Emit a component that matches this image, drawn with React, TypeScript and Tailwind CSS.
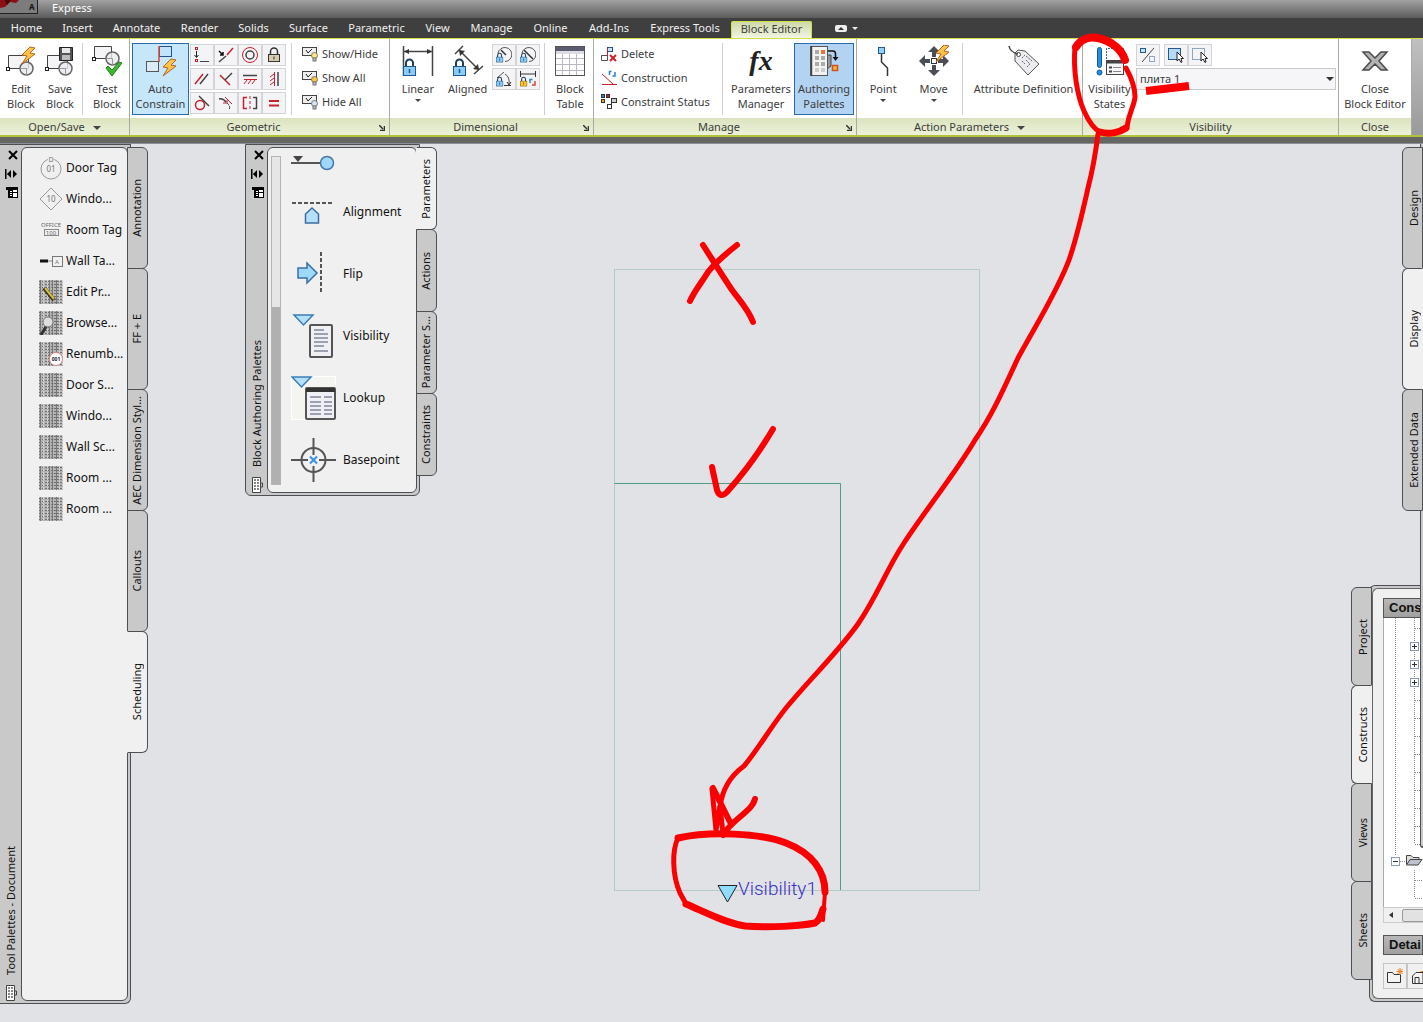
import { useState } from "react";
import type { ReactNode } from "react";

const menuTabs: string[][] = [
  ["Home", "w-[53px]"],
  ["Insert", "w-[49px]"],
  ["Annotate", "w-[69px]"],
  ["Render", "w-[57px]"],
  ["Solids", "w-[51px]"],
  ["Surface", "w-[59px]"],
  ["Parametric", "w-[77px]"],
  ["View", "w-[45px]"],
  ["Manage", "w-[63px]"],
  ["Online", "w-[55px]"],
  ["Add-Ins", "w-[62px]"],
  ["Express Tools", "w-[90px]"],
];

const Bolt = ({ x, y }: { x: number; y: number }) => (
  <path
    transform={`translate(${x} ${y})`}
    d="M9 0 L1 8 L6 9 L1 17 L14 7 L9 6 L14 1 Z"
    fill="#ffc24a"
    stroke="#b5651d"
    strokeWidth="1"
  />
);

const Lock = ({ x, y, s = 1, fill = "#8ccbf3", line = "#1b5a93" }: { x: number; y: number; s?: number; fill?: string; line?: string }) => (
  <g transform={`translate(${x} ${y}) scale(${s})`}>
    <path d="M3 8 V4 a3.5 3.5 0 0 1 7 0 V8" fill="none" stroke="#1e3d5c" strokeWidth="2" />
    <rect x="0.5" y="7.5" width="12" height="9" fill={fill} stroke={line} />
    <path d="M6.5 10 V14" stroke={line} strokeWidth="1.5" />
  </g>
);

function Icon32({ children }: { children: ReactNode }) {
  return (
    <svg className="h-8 w-8 shrink-0" viewBox="0 0 32 32" fill="none" aria-hidden="true">
      {children}
    </svg>
  );
}

function Icon16({ children }: { children: ReactNode }) {
  return (
    <svg className="h-4 w-4 shrink-0" viewBox="0 0 16 16" fill="none" aria-hidden="true">
      {children}
    </svg>
  );
}

const BlockShape = () => (
  <>
    <path d="M3.5 10.5 H23.5 V23.5 H3.5 Z" fill="#f4f4f6" stroke="#444" />
    <rect x="1.5" y="22.5" width="3" height="3" fill="#fff" stroke="#222" />
    <circle cx="21.5" cy="23.5" r="6.5" fill="#e9eaee" fillOpacity="0.8" stroke="#666" strokeWidth="1.5" />
    <path d="M15 23.5 H21.5 V30" stroke="#999" />
  </>
);

const icons: Record<string, ReactNode> = {
  edit: (
    <Icon32>
      <BlockShape />
      <Bolt x={16} y={2} />
    </Icon32>
  ),
  save: (
    <Icon32>
      <BlockShape />
      <path d="M15.5 2.5 H28.5 V15.5 H15.5 Z" fill="#555" stroke="#222" />
      <rect x="18" y="3" width="8" height="5" fill="#e8e8e8" />
      <rect x="18" y="10" width="8" height="5" fill="#bbb" />
    </Icon32>
  ),
  test: (
    <Icon32>
      <path d="M3.5 1.5 H20.5 V13.5 H3.5 Z" fill="#f4f4f6" stroke="#444" />
      <rect x="1.5" y="12.5" width="3" height="3" fill="#fff" stroke="#222" />
      <circle cx="21.5" cy="13.5" r="6.5" fill="#e9eaee" fillOpacity="0.8" stroke="#666" strokeWidth="1.5" />
      <path d="M15 13.5 H21.5 V20" stroke="#999" />
      <path d="M15 23 L17 21 L21 25 L28 17 L31 18 L21 31 Z" fill="#3db52f" stroke="#23801b" />
    </Icon32>
  ),
  auto: (
    <Icon32>
      <rect x="1.5" y="16.5" width="12" height="10" fill="#dcebf5" stroke="#555" />
      <rect x="14.5" y="1.5" width="12" height="10" fill="#bfe4fb" stroke="#23538a" />
      <path d="M14 1 V17" stroke="#d8452e" strokeWidth="1.5" />
      <Bolt x={17} y={14} />
    </Icon32>
  ),
  linear: (
    <Icon32>
      <path d="M1.5 1 V31 M30.5 1 V31 M2 6.5 H30" stroke="#444" strokeWidth="1.5" />
      <path d="M2 6.5 L7 4 V9 Z M30 6.5 L25 4 V9 Z" fill="#333" />
      <Lock x={1} y={14} />
    </Icon32>
  ),
  aligned: (
    <Icon32>
      <path d="M3 9 L11 1 M22 29 L31 21 M7 5 L27 25" stroke="#444" strokeWidth="1.5" />
      <path d="M7 5 L13 6 L8 11 Z M27 25 L21 24 L26 19 Z" fill="#333" />
      <Lock x={1} y={14} />
    </Icon32>
  ),
  table: (
    <Icon32>
      <rect x="1.5" y="1.5" width="29" height="29" fill="#fff" stroke="#555" />
      <rect x="2" y="2" width="28" height="4" fill="#5c5c70" />
      <path d="M2 13.5 H30 M2 19.5 H30 M2 25.5 H30 M8.5 7 V30 M15.5 7 V30 M22.5 7 V30" stroke="#b9b9c3" />
      <path d="M2 7.5 H30" stroke="#dcdce4" strokeWidth="3" />
    </Icon32>
  ),
  authoring: (
    <Icon32>
      <path d="M19 10 H23 V21 L19 24 Z" fill="#999" stroke="#444" />
      <rect x="2.5" y="1.5" width="17" height="29" fill="#f2f2f2" stroke="#555" />
      <path d="M3.5 1 V31" stroke="#444" strokeWidth="1.5" />
      <g fill="#aaa">
        <rect x="7" y="5" width="4" height="4" />
        <rect x="7" y="11" width="4" height="4" />
        <rect x="13" y="11" width="4" height="4" />
        <rect x="7" y="17" width="4" height="4" />
        <rect x="13" y="17" width="4" height="4" />
        <rect x="7" y="23" width="4" height="4" fill="#ccc" />
        <rect x="13" y="23" width="4" height="4" fill="#ccc" />
      </g>
      <rect x="13" y="5" width="4" height="4" fill="#e8703a" />
      <path d="M20 6 H25 Q27.5 6 27.5 9 V13" stroke="#111" strokeWidth="1.5" />
      <path d="M24.5 12 H30.5 L27.5 16 Z" fill="#111" />
      <rect x="24.5" y="20.5" width="5" height="5" fill="#ffb52e" stroke="#d4501c" strokeWidth="1.5" />
    </Icon32>
  ),
  point: (
    <Icon32>
      <rect x="11.5" y="2.5" width="6" height="6" fill="#8fd0fb" stroke="#275a8c" />
      <path d="M14.5 9 V17 L20.5 23 V31" stroke="#333" strokeWidth="1.5" />
    </Icon32>
  ),
  move: (
    <Icon32>
      <g fill="#4b4e55">
        <path d="M16 1 L22 7 H18 V12 H14 V7 H10 Z" />
        <path d="M16 31 L22 25 H18 V20 H14 V25 H10 Z" />
        <path d="M1 16 L7 10 V14 H12 V18 H7 V22 Z" />
        <path d="M31 16 L25 10 V14 H20 V18 H25 V22 Z" />
      </g>
      <rect x="13.5" y="13.5" width="5" height="5" fill="#fff" stroke="#333" />
      <Bolt x={17} y={0} />
    </Icon32>
  ),
  attribute: (
    <Icon32>
      <path d="M7 8 L10 5 L17 6 L31 19 L20 30 L7 16 Z" fill="#ececf0" stroke="#555" />
      <circle cx="10.5" cy="9.5" r="2" fill="#fff" stroke="#444" />
      <path d="M1 1 Q2 7 10 9" stroke="#444" strokeWidth="1.5" />
      <path d="M14 13 L17 10 M18 11 L24 16 M14 16 L17 19 M18 15 L22 19 M19 22 L22 19" stroke="#666" strokeDasharray="2 1" />
    </Icon32>
  ),
  states: (
    <Icon32>
      <path d="M12.5 17 V3.5 H30" stroke="#2d67a5" strokeDasharray="2 1" />
      <rect x="3.5" y="2.5" width="4" height="20" rx="2" fill="#2a8de4" stroke="#145698" />
      <circle cx="5.5" cy="27.5" r="2.5" fill="#2a8de4" stroke="#145698" />
      <rect x="12.5" y="15.5" width="17" height="14" fill="#f6f6f8" stroke="#444" />
      <path d="M12 17 H30" stroke="#444" strokeWidth="3" />
      <path d="M19 22.5 H27 M19 26.5 H27" stroke="#888" />
      <path d="M15 22.5 H18 M15 26.5 H18" stroke="#444" strokeWidth="2" />
    </Icon32>
  ),
  close: (
    <Icon32>
      <path
        d="M4 7 H10 L16 13 L22 7 H28 L20 16 L28 25 H22 L16 19 L10 25 H4 L12 16 Z"
        fill="#b2b2b2"
        stroke="#4a4a4a"
        strokeWidth="1.5"
      />
    </Icon32>
  ),
};

const geometric: [string, ReactNode][] = [
  ["Coincident", <><rect x="1.5" y="0.5" width="2" height="2" stroke="#c8202c" /><path d="M2.500 4 V10 M0.5 8 L2.5 10.500 L4.500 8" stroke="#222" /><rect x="1.500" y="12.500" width="2" height="2" stroke="#c8202c" /><path d="M6 14.500 H15" stroke="#444" /></>],
  ["Collinear", <><path d="M1 15 L8 9" stroke="#444" strokeWidth="1.5" /><path d="M9 8 L15 1" stroke="#c8202c" strokeWidth="1.5" /><path d="M1 4 L5 8 M2 8 H5 V5" stroke="#111" strokeWidth="1.5" /></>],
  ["Concentric", <><circle cx="8" cy="8" r="7.5" stroke="#c8202c" /><circle cx="8" cy="8" r="4" stroke="#444" strokeWidth="1.5" /></>],
  ["Fix", <><path d="M4.5 7 V4.5 a3.5 3.5 0 0 1 7 0 V7" stroke="#333" strokeWidth="1.5" /><rect x="2.5" y="7.5" width="11" height="7" fill="#d8ccb0" stroke="#333" /><path d="M8 9.5 V12.5" stroke="#333" /></>],
  ["Parallel", <><path d="M1 13 L9 3" stroke="#c8202c" strokeWidth="1.5" /><path d="M6 13 L14 3" stroke="#444" strokeWidth="1.5" /></>],
  ["Perpendicular", <><path d="M2 4 L12 14" stroke="#c8202c" strokeWidth="1.5" /><path d="M7 9 L14 2" stroke="#444" strokeWidth="1.5" /></>],
  ["Horizontal", <><path d="M1 4.5 H15" stroke="#444" strokeWidth="1.5" /><path d="M2 8.5 H15 M5 9 L2 13 M9 9 L6 13 M13 9 L10 13" stroke="#c8202c" /></>],
  ["Vertical", <><path d="M12 1 V15" stroke="#444" strokeWidth="1.5" /><path d="M8.5 1 V15 M8 3 L4 6 M8 7 L4 10 M8 11 L4 14" stroke="#c8202c" /></>],
  ["Tangent", <><circle cx="6" cy="10" r="4.5" stroke="#c8202c" strokeWidth="1.5" /><path d="M5 1 L15 11" stroke="#444" strokeWidth="1.5" /></>],
  ["Smooth", <><path d="M1 4 Q5 3 8 7" stroke="#444" strokeWidth="1.5" /><path d="M7 2 L14 9 M5 8 H9 V5" stroke="#c8202c" /><path d="M9 8 Q13 11 11 15" stroke="#444" strokeDasharray="3 1" /></>],
  ["Symmetric", <><path d="M5 2.5 H1.5 V13.5 H5" stroke="#c8202c" strokeWidth="1.5" /><path d="M11 2.5 H14.5 V13.5 H11" stroke="#444" strokeWidth="1.5" /><path d="M8 1 V15" stroke="#c8202c" strokeDasharray="3 2" /></>],
  ["Equal", <path d="M3 6 H13 M3 10.5 H13" stroke="#c8202c" strokeWidth="2" />],
];

const dimensional: [string, ReactNode][] = [
  ["Radius", <><path d="M2 6 A7 7 0 1 1 9 14.5" stroke="#555" /><path d="M10 8 L5 3" stroke="#333" strokeWidth="1.5" /><Lock x={0} y={6} s={0.55} /></>],
  ["Diameter", <><path d="M2 6 A7 7 0 1 1 9 14.5" stroke="#555" /><path d="M13 12 L4 3" stroke="#333" strokeWidth="1.5" /><Lock x={0} y={6} s={0.55} /></>],
  ["Angular", <><path d="M1 7 L8 1 M9 3 Q14 6 13 13" stroke="#555" /><path d="M8 14.5 H15 M11 11 L13 14 L15 11" stroke="#333" /><Lock x={0} y={6} s={0.55} /></>],
  ["Convert", <><path d="M0.5 0 V6 M15.5 0 V6 M1 3 H15" stroke="#333" /><Lock x={0} y={6} s={0.55} fill="#ffc72e" line="#8a5a10" /><path d="M10 12 V8.5 H12.500" stroke="#2d7fd0" strokeWidth="1.5" /><path d="M15 10 V14 H12" stroke="#d8452e" strokeWidth="1.5" /></>],
];

const BulbRow = ({ color }: { color: string }) => (
  <Icon16>
    <rect x="0.5" y="1.5" width="14" height="8" fill="#eee" stroke="#444" />
    <path d="M4 4 L6 7 L10 3" stroke="#222" />
    <circle cx="12.5" cy="9.5" r="3" fill={color} stroke="#777" />
    <rect x="11" y="12" width="3" height="3" fill="#bbb" stroke="#777" />
  </Icon16>
);

function BigButton({ icon, lines, width, active, arrow }: { icon: ReactNode; lines: string[]; width: string; active?: string; arrow?: boolean }) {
  return (
    <button
      className={`flex h-[72px] shrink-0 flex-col items-center border pt-px leading-[15px] whitespace-nowrap ${width} ${active ?? "border-transparent"}`}
    >
      {icon}
      <span className="mt-1 flex flex-col items-center">
        {lines.map((l) => (
          <span key={l}>{l}</span>
        ))}
      </span>
      {arrow && <span className="mt-[3px] border-x-[3px] border-t-[3px] border-x-transparent border-t-[#444]" />}
    </button>
  );
}

function SmallGrid({ items, cols }: { items: [string, ReactNode][]; cols: string }) {
  return (
    <div className={`mt-px grid shrink-0 gap-y-[2px] self-start ${cols}`}>
      {items.map(([name, art]) => (
        <button key={name} aria-label={name} className="flex h-[22px] w-6 items-center justify-center border border-[#d3d3d8] bg-[#f4f4f7]">
          <Icon16>{art}</Icon16>
        </button>
      ))}
    </div>
  );
}

function RowButton({ icon, text }: { icon: ReactNode; text: string }) {
  return (
    <button className="flex h-6 items-center gap-1 pb-[2px] whitespace-nowrap">
      {icon}
      <span>{text}</span>
    </button>
  );
}

const Divider = () => <div className="h-[72px] w-px shrink-0 bg-[#cfcfd4]" />;

function Panel({ title, width, drop, launcher, children }: { title: string; width: string; drop?: boolean; launcher?: boolean; children: ReactNode }) {
  return (
    <section className={`flex shrink-0 flex-col border-r border-[#a9aba0] ${width}`}>
      <div className="flex h-[79px] items-start overflow-hidden pt-1">{children}</div>
      <div className="flex h-[17px] items-center bg-linear-to-b from-[#dbe3c0] to-[#edf2d8] px-1 pt-[2px]">
        <h2 className="flex flex-1 items-center justify-center gap-2">
          {title}
          {drop && <span className="border-x-4 border-t-4 border-x-transparent border-t-[#444]" />}
        </h2>
        {launcher && (
          <svg className="ml-[6px] h-[6px] w-[6px]" viewBox="0 0 6 6" fill="none" aria-hidden="true">
            <path d="M0 0 L4 4 M5.5 1 V5.5 H1" stroke="#333" strokeWidth="1.5" />
          </svg>
        )}
      </div>
    </section>
  );
}

function Ribbon() {
  const [state, setState] = useState("плита 1");
  return (
    <div className="flex border-t border-b-2 border-t-[#d3e04a] border-b-[#b2c137] bg-white text-[11px] text-[#3c3c3c]">
      <Panel title="Open/Save" width="w-[130px]" drop>
        <BigButton icon={icons.edit} lines={["Edit", "Block"]} width="w-[42px]" />
        <BigButton icon={icons.save} lines={["Save", "Block"]} width="w-[36px]" />
        <div className="w-[5px]" />
        <Divider />
        <div className="w-[2px]" />
        <BigButton icon={icons.test} lines={["Test", "Block"]} width="w-[44px]" />
      </Panel>
      <Panel title="Geometric" width="w-[260px]" launcher>
        <div className="w-[2px]" />
        <BigButton icon={icons.auto} lines={["Auto", "Constrain"]} width="w-[57px]" active="border-[#2a6cab] bg-[#c6e6f9]" />
        <div className="w-px" />
        <SmallGrid items={geometric} cols="grid-cols-[24px_24px_24px_24px]" />
        <div className="w-[5px]" />
        <Divider />
        <div className="ml-[10px]">
          <RowButton icon={<BulbRow color="#ffe680" />} text="Show/Hide" />
          <RowButton icon={<BulbRow color="#ffc23a" />} text="Show All" />
          <RowButton icon={<BulbRow color="#cfe6fa" />} text="Hide All" />
        </div>
      </Panel>
      <Panel title="Dimensional" width="w-[204px]" launcher>
        <div className="w-[7px]" />
        <BigButton icon={icons.linear} lines={["Linear"]} width="w-[44px]" arrow />
        <div className="w-[4px]" />
        <BigButton icon={icons.aligned} lines={["Aligned"]} width="w-[49px]" />
        <SmallGrid items={dimensional} cols="grid-cols-[24px_24px]" />
        <div className="w-[5px]" />
        <Divider />
        <div className="w-[2px]" />
        <BigButton icon={icons.table} lines={["Block", "Table"]} width="w-[46px]" />
      </Panel>
      <Panel title="Manage" width="w-[263px]" launcher>
        <div className="w-[123px] pl-[7px]">
          <RowButton
            icon={
              <Icon16>
                <path d="M0.5 9.5 H6.5 V14.5 H0.5 Z" fill="#fff" stroke="#555" />
                <rect x="6.5" y="1.5" width="5" height="4" fill="#bfe4fb" stroke="#23538a" />
                <path d="M6.5 2 V10" stroke="#c8202c" />
                <path d="M9 9 L15 15 M15 9 L9 15" stroke="#c8202c" strokeWidth="2" />
              </Icon16>
            }
            text="Delete"
          />
          <RowButton
            icon={
              <Icon16>
                <path d="M1 4 L12 14 M1 14.5 H16" stroke="#c8202c" />
                <path d="M8.5 5 V1.5 H10.500" stroke="#2d7fd0" strokeWidth="1.5" />
                <path d="M14 2 V6 H11.5" stroke="#2d7fd0" strokeWidth="1.5" />
              </Icon16>
            }
            text="Construction"
          />
          <RowButton
            icon={
              <Icon16>
                <rect x="0.5" y="0.5" width="3" height="3" fill="#2d7fd0" stroke="#333" />
                <rect x="5.5" y="0.5" width="3" height="3" fill="#c8202c" stroke="#333" />
                <rect x="0.5" y="5.5" width="3" height="3" fill="#f0a030" stroke="#333" />
                <rect x="6.5" y="10.5" width="4" height="4" fill="#fff" stroke="#333" />
                <rect x="10.5" y="4.5" width="5" height="4" fill="#ccc" stroke="#333" />
                <path d="M10.5 5 V11" stroke="#333" />
              </Icon16>
            }
            text="Constraint Status"
          />
        </div>
        <div className="w-[5px]" />
        <Divider />
        <div className="w-[5px]" />
        <BigButton
          icon={
            <span className="flex h-8 items-center font-['Liberation_Serif',serif] text-[28px] leading-8 font-bold text-[#222] italic">fx</span>
          }
          lines={["Parameters", "Manager"]}
          width="w-[66px]"
        />
        <BigButton icon={icons.authoring} lines={["Authoring", "Palettes"]} width="w-[60px]" active="border-[#2a6cab] bg-[#b3d3f2]" />
      </Panel>
      <Panel title="Action Parameters" width="w-[226px]" drop>
        <div className="w-[4px]" />
        <BigButton icon={icons.point} lines={["Point"]} width="w-[47px]" arrow />
        <div className="w-[3px]" />
        <BigButton icon={icons.move} lines={["Move"]} width="w-[50px]" arrow />
        <div className="w-[5px]" />
        <Divider />
        <div className="w-[3px]" />
        <BigButton icon={icons.attribute} lines={["Attribute Definition"]} width="w-[117px]" />
      </Panel>
      <Panel title="Visibility" width="w-[256px]">
        <BigButton icon={icons.states} lines={["Visibility", "States"]} width="w-[53px]" />
        <div className="flex w-[200px] flex-col gap-[2px] pt-px">
          <div className="flex">
            <button aria-label="Visibility mode" className="mr-1 flex h-[22px] w-6 items-center justify-center border border-[#d3d3d8] bg-[#f4f4f7]">
              <Icon16>
                <rect x="0.5" y="1.5" width="5" height="4" fill="#bfe4fb" stroke="#275a8c" />
                <path d="M2 15 L14 1" stroke="#444" />
                <rect x="9.5" y="9.5" width="5" height="5" stroke="#275a8c" strokeDasharray="1 1" />
              </Icon16>
            </button>
            <button aria-label="Make visible" className="flex h-[22px] w-6 items-center justify-center border border-[#d3d3d8] bg-[#f4f4f7]">
              <Icon16>
                <rect x="0.5" y="1.5" width="12" height="11" fill="#b5dbf5" stroke="#275a8c" />
                <path d="M9 5 V14 L11 12 L13 15.5 L14 15 L13 11.5 H15.5 Z" fill="#fff" stroke="#222" />
              </Icon16>
            </button>
            <button aria-label="Make invisible" className="flex h-[22px] w-6 items-center justify-center border border-[#d3d3d8] bg-[#f4f4f7]">
              <Icon16>
                <rect x="0.5" y="1.5" width="12" height="11" stroke="#275a8c" strokeDasharray="1 1" />
                <path d="M9 5 V14 L11 12 L13 15.5 L14 15 L13 11.5 H15.5 Z" fill="#fff" stroke="#222" />
              </Icon16>
            </button>
          </div>
          <div className="relative">
            <select
              aria-label="Visibility state"
              value={state}
              onChange={(e) => setState(e.target.value)}
              className="h-[22px] w-full appearance-none border border-[#c9c9ce] bg-[#f6f6f8] pl-[3px] text-[11px]"
            >
              <option>плита 1</option>
              <option>плита 2</option>
            </select>
            <span className="pointer-events-none absolute top-[9px] right-[2px] border-x-4 border-t-4 border-x-transparent border-t-[#333]" />
          </div>
        </div>
      </Panel>
      <Panel title="Close" width="w-[73px]">
        <BigButton icon={icons.close} lines={["Close", "Block Editor"]} width="w-[72px]" />
      </Panel>
      <div className="flex-1 bg-linear-to-b from-[#c0c0c0] to-[#9a9a9a]" />
    </div>
  );
}

function SideTabs({ tabs, active, size, side }: { tabs: string[]; active: string; size: string; side: "left" | "right" }) {
  const [current, setCurrent] = useState(active);
  const shape = side === "right" ? "rounded-r-md pr-[2px]" : "rounded-l-md pl-[2px]";
  const open = side === "right" ? "border-l-[#f0f0f0] bg-[#f0f0f0]" : "border-r-[#f0f0f0] bg-[#f0f0f0]";
  return (
    <div className="relative z-10 flex w-[21px] shrink-0 flex-col" role="tablist">
      {tabs.map((t) => (
        <button
          key={t}
          role="tab"
          aria-selected={t === current}
          onClick={() => setCurrent(t)}
          className={`flex items-center justify-center border border-[#4c4f54] not-first:-mt-px ${size} ${shape} ${
            t === current ? open : "bg-[#c9c9c9]"
          }`}
        >
          <span className="rotate-180 whitespace-nowrap [writing-mode:vertical-rl]">{t}</span>
        </button>
      ))}
    </div>
  );
}

function TitleStrip({ title, width }: { title: string; width: string }) {
  return (
    <div className={`flex shrink-0 flex-col items-center pt-[3px] text-[11px] ${width}`}>
      <button aria-label="Close palette" className="self-end pr-[3px]">
        <svg className="h-[10px] w-[10px]" viewBox="0 0 10 10" fill="none" aria-hidden="true">
          <path d="M1 1 L9 9 M9 1 L1 9" stroke="#000" strokeWidth="2" />
        </svg>
      </button>
      <button aria-label="Auto-hide" className="mt-[8px]">
        <svg className="h-[12px] w-[12px]" viewBox="0 0 12 12" aria-hidden="true">
          <path d="M0 1 H1.5 V11 H0 Z M2 6 L6 2 V10 Z M12 6 L8 2 V10 Z M2 5.5 H6 V6.5 H2 Z" />
        </svg>
      </button>
      <button aria-label="Properties" className="mt-[7px] self-end pr-[3px]">
        <svg className="h-[11px] w-[12px]" viewBox="0 0 12 11" fill="none" aria-hidden="true">
          <path d="M0 0 H12 V11 H2 V3 H0 Z" fill="#000" />
          <path d="M4 4.5 H6 M4 6.5 H6 M4 8.5 H6" stroke="#fff" />
          <path d="M7 3 H11 V5 H7 Z M7 6 H11 V10 H7 Z" fill="#fff" />
        </svg>
      </button>
      <h2 className="mt-auto rotate-180 whitespace-nowrap [writing-mode:vertical-rl]">{title}</h2>
      <svg className="mt-[10px] h-4 w-3" viewBox="0 0 12 16" fill="none" aria-hidden="true">
        <path d="M1.5 0.5 H9.5 V15.5 H1.5 Z" fill="#fff" stroke="#444" />
        <path d="M9.5 6 H11.5 V10 H9.5" stroke="#444" />
        <path d="M4 2 V14 M7 2 V14" stroke="#888" strokeWidth="2" strokeDasharray="2 1" />
      </svg>
    </div>
  );
}

const Hatch = () => (
  <>
    <rect width="24" height="24" fill="#b4b4b4" />
    <path
      d="M0 1.5 H24 M0 4.5 H24 M0 7.5 H24 M0 10.5 H24 M0 13.5 H24 M0 16.5 H24 M0 19.5 H24 M0 22.5 H24"
      stroke="#6f6f6f"
      strokeDasharray="2 1"
    />
    <path d="M1.5 0 V24 M10.5 0 V24 M13.5 0 V24 M17.5 0 V24" stroke="#777" />
    <path d="M4.5 0 V24 M8.5 0 V24 M20.5 0 V24 M23.5 0 V24" stroke="#d5d5d5" strokeDasharray="2 1" />
  </>
);

const toolItems: [string, ReactNode][] = [
  ["Door Tag", <><circle cx="12" cy="13" r="10" stroke="#999" /><rect x="9" y="0" width="6" height="6" fill="#f0f0f0" /><text x="12" y="6" textAnchor="middle" fontSize="7" fill="#777">D</text><text x="12" y="16" textAnchor="middle" fontSize="8" fill="#777">01</text></>],
  ["Windo...", <><path d="M12 1 L23 12 L12 23 L1 12 Z" stroke="#999" /><text x="12" y="15" textAnchor="middle" fontSize="8" fill="#777">10</text></>],
  ["Room Tag", <><text x="12" y="9" textAnchor="middle" fontSize="6" fill="#666">OFFICE</text><rect x="5.5" y="11.5" width="14" height="6" stroke="#888" /><text x="12" y="17" textAnchor="middle" fontSize="6" fill="#666">100</text></>],
  ["Wall Ta...", <><path d="M1 12 H9" stroke="#111" strokeWidth="3" /><path d="M9 12 H13" stroke="#888" /><rect x="13.5" y="7.5" width="10" height="10" stroke="#777" /><text x="18" y="15" textAnchor="middle" fontSize="6" fill="#777">A</text></>],
  ["Edit Pr...", <><Hatch /><path d="M5 8 L15 20" stroke="#333" strokeWidth="4" /><path d="M6 8 L15 19" stroke="#d8c030" strokeWidth="2" /></>],
  ["Browse...", <><Hatch /><path d="M8 14 L2 24" stroke="#333" strokeWidth="3" /><circle cx="9" cy="11" r="5" fill="#ddd" stroke="#777" /></>],
  ["Renumb...", <><Hatch /><circle cx="17" cy="17" r="6.5" fill="#fff" stroke="#d88" /><text x="17" y="19" textAnchor="middle" fontSize="5" fontWeight="bold" fill="#222">001</text></>],
  ["Door S...", <Hatch />],
  ["Windo...", <Hatch />],
  ["Wall Sc...", <Hatch />],
  ["Room ...", <Hatch />],
  ["Room ...", <Hatch />],
];

function ToolPalette() {
  return (
    <aside className="mb-[18px] flex shrink-0 text-[12px] leading-4 text-[#111]">
      <div className="flex w-[131px] rounded-br-md border-t border-r border-b border-[#4c4f54] bg-[#c9c9c9] pt-[2px] pr-[2px] pb-[2px]">
        <TitleStrip title="Tool Palettes - Document" width="w-[21px]" />
        <ul className="flex-1 rounded-md border border-[#4c4f54] bg-[#f0f0f0] pt-1">
          {toolItems.map(([name, art], i) => (
            <li key={i}>
              <button className="flex h-[31px] items-center gap-[3px] pl-[17px] whitespace-nowrap">
                <svg className="h-6 w-6 shrink-0" viewBox="0 0 24 24" fill="none" aria-hidden="true">
                  {art}
                </svg>
                {name}
              </button>
            </li>
          ))}
        </ul>
      </div>
      <div className="-ml-1 pt-[3px] text-[11px]">
        <SideTabs
          side="right"
          size="h-[122px]"
          active="Scheduling"
          tabs={["Annotation", "FF + E", "AEC Dimension Styl...", "Callouts", "Scheduling"]}
        />
      </div>
    </aside>
  );
}

const paramItems: [string, ReactNode][] = [
  ["", <><path d="M0 35 H31" stroke="#555" strokeWidth="2" /><path d="M2 28 H12 L7 34 Z" fill="#444" /><circle cx="36" cy="35" r="6.5" fill="#9ed8fb" stroke="#4679a8" strokeWidth="1.5" /></>],
  ["Alignment", <><path d="M1 13 H42" stroke="#555" strokeWidth="2" strokeDasharray="4 2" /><path d="M21 18 L27.5 24 V33 H14.5 V24 Z" fill="#b5e0fb" stroke="#3a6fa3" strokeWidth="1.5" /></>],
  ["Flip", <><path d="M30 0 V42" stroke="#555" strokeWidth="2" strokeDasharray="4 2" /><path d="M7 16 H16 V11 L26 21 L16 31 V26 H7 Z" fill="#9ed8fb" stroke="#3a6fa3" strokeWidth="1.5" /></>],
  ["Visibility", <><path d="M3 1 H22 L12.5 11 Z" fill="#b5e0fb" stroke="#3a7cb8" strokeWidth="1.5" /><rect x="19" y="11" width="22" height="32" rx="1" fill="#eef0f4" stroke="#555" strokeWidth="2" /><path d="M23 16 H33 M23 20 H37 M23 24 H37 M23 28 H37 M23 32 H33 M23 37 H37" stroke="#82859a" strokeWidth="1.5" /></>],
  ["Lookup", <><rect x="0.5" y="0.5" width="44" height="43" fill="#f4f4f0" stroke="#fff" /><path d="M1 1 H20 L10.5 11 Z" fill="#b5e0fb" stroke="#3a7cb8" strokeWidth="1.5" /><rect x="15" y="12" width="29" height="31" rx="1" fill="#eef0f4" stroke="#555" strokeWidth="2" /><path d="M15 14 H44" stroke="#333" strokeWidth="4" /><path d="M19 21 H30 M33 21 H41 M19 26 H30 M33 26 H41 M19 30 H30 M33 30 H41 M19 34 H30 M33 34 H41 M19 38 H30 M33 38 H41" stroke="#82859a" strokeWidth="1.5" /></>],
  ["Basepoint", <><circle cx="22.5" cy="22" r="12" stroke="#555" strokeWidth="2" /><path d="M22.5 0 V17 M22.5 28 V44 M0 22 H17 M28 22 H45" stroke="#555" strokeWidth="2" /><path d="M19 18.5 L26 25.5 M26 18.5 L19 25.5" stroke="#3a8fe8" strokeWidth="2" /></>],
];

function BlockPalette() {
  return (
    <aside className="absolute top-0 left-[245px] flex text-[12px] leading-4 text-[#111]">
      <div className="flex h-[352px] w-[175px] rounded-b-md border border-[#4c4f54] bg-[#c9c9c9] py-[2px] pr-[2px]">
        <TitleStrip title="Block Authoring Palettes" width="w-[21px]" />
        <div className="flex flex-1 overflow-hidden rounded-md border border-[#4c4f54] bg-[#f0f0f0] pl-[3px]">
          <div className="mt-2 mb-[7px] w-[10px] shrink-0 border border-[#b4b4b4] bg-[#b0b0b0]">
            <div className="h-[150px] bg-[#e6e6e6]" />
          </div>
          <ul className="-mt-[29px] ml-[10px]">
            {paramItems.map(([name, art]) => (
              <li key={name}>
                <button aria-label={name || "Linear"} className="flex h-[62px] items-center gap-[6px] whitespace-nowrap">
                  <svg className="h-11 w-[46px] shrink-0" viewBox="0 0 46 44" fill="none" aria-hidden="true">
                    {art}
                  </svg>
                  {name}
                </button>
              </li>
            ))}
          </ul>
        </div>
      </div>
      <div className="-ml-1 pt-[3px] text-[11px]">
        <SideTabs side="right" size="h-[83px]" active="Parameters" tabs={["Parameters", "Actions", "Parameter S...", "Constraints"]} />
      </div>
    </aside>
  );
}

function DisplayPalette() {
  return (
    <aside className="absolute top-0 right-0 z-10 flex text-[11px] leading-4 text-[#111]">
      <div className="pt-[3px]">
        <SideTabs side="left" size="h-[122px]" active="Display" tabs={["Design", "Display", "Extended Data"]} />
      </div>
      <div className="-ml-[3px] h-[704px] w-[3px] rounded-bl-md border-b-2 border-l border-[#4c4f54] bg-[#c9c9c9]" />
    </aside>
  );
}

function ProjectPalette() {
  return (
    <aside className="absolute top-[441px] right-0 flex text-[12px] leading-4 text-[#111]">
      <div className="pt-[2px] text-[11px]">
        <SideTabs side="left" size="h-[99px]" active="Constructs" tabs={["Project", "Constructs", "Views", "Sheets"]} />
      </div>
      <div className="-ml-[3px] h-[417px] w-[54px] rounded-l-md border border-r-0 border-[#4c4f54] bg-[#c9c9c9] py-[2px] pl-[2px]">
        <div className="flex h-full flex-col overflow-hidden rounded-l-md border border-r-0 border-[#666] bg-[#f0f0f0] pt-[9px] pl-[10px]">
          <h3 className="h-5 shrink-0 border border-[#555] bg-linear-to-b from-[#b8b8b8] to-[#a0a0a0] pl-[5px] font-['Liberation_Sans',sans-serif] text-[13px] leading-[18px] font-bold">
            Cons
          </h3>
          <svg className="h-[289px] w-10 shrink-0 border-l border-[#aaa] bg-white" viewBox="0 0 39 289" fill="none" aria-hidden="true">
            <path
              d="M11.5 0 V238 M30.5 0 V226 M31 10.5 H36 M31 82.5 H36 M31 100.5 H36 M31 118.5 H36 M31 136.5 H36 M31 154.5 H36 M31 172.5 H36 M31 190.5 H36 M31 208.5 H36 M31 226.5 H36 M16 243.5 H22 M30.5 252 V280 M31 262.5 H39 M31 280.5 H39"
              stroke="#888"
              strokeDasharray="1 1"
            />
            {[28, 46, 64].map((y) => (
              <g key={y}>
                <rect x="26.5" y={y - 3.5} width="8" height="8" fill="#fff" stroke="#8a9ab0" />
                <path d={`M28 ${y + 0.5} H33 M30.5 ${y - 2} V${y + 3}`} stroke="#333" />
              </g>
            ))}
            <rect x="7.5" y="239.5" width="8" height="8" fill="#fff" stroke="#8a9ab0" />
            <path d="M9 243.5 H14" stroke="#333" />
            <path d="M22.5 246 V237.5 H27 L29 239.5 H35 V242" fill="#ddd" stroke="#444" />
            <path d="M22.5 247 L26 241.5 H38 L34 247 Z" fill="#bcc2cc" stroke="#444" />
          </svg>
          <div className="flex h-4 shrink-0 items-center border-y border-l border-[#ccc] bg-[#f0f0f0] pl-[5px]">
            <span className="border-y-[3px] border-r-4 border-y-transparent border-r-[#333]" />
            <span className="ml-[9px] h-[13px] w-10 shrink-0 rounded-xs border border-[#999] bg-[#e2e2e2]" />
          </div>
          <h3 className="mt-3 h-5 shrink-0 border border-[#555] bg-linear-to-b from-[#b8b8b8] to-[#a0a0a0] pl-[5px] font-['Liberation_Sans',sans-serif] text-[13px] leading-[18px] font-bold">
            Detai
          </h3>
          <div className="mt-2 flex">
            <button aria-label="Add category" className="h-[26px] w-6 shrink-0 border border-[#c4c4c8] p-[3px]">
              <Icon16>
                <path d="M0.5 14.5 V4.5 H5.5 L7 6.5 H13.5 V14.5 Z" fill="#f4f4f4" stroke="#333" />
                <path d="M13 0 V7 M9.5 3.5 H16 M10.5 1 L15.5 6 M15.5 1 L10.5 6" stroke="#e8801c" />
              </Icon16>
            </button>
            <button aria-label="Add construct" className="h-[26px] w-6 shrink-0 border border-[#c4c4c8] p-[3px]">
              <Icon16>
                <path d="M1.5 15.5 V8 L5 4.5 H12 V15.5 Z M4 15 V9.5 H8 V15" fill="#f4f4f4" stroke="#333" />
                <path d="M13 0 V7 M9.5 3.5 H16" stroke="#e8801c" />
              </Icon16>
            </button>
          </div>
        </div>
      </div>
    </aside>
  );
}

function Drawing() {
  return (
    <svg className="absolute top-0 left-0 h-[878px] w-[1423px]" viewBox="0 144 1423 878" fill="none">
      <path d="M614.5 269.5 H979.5 V890.5 H614.5 Z" stroke="#b3cac6" />
      <path d="M614.5 483.5 H840.5 V890" stroke="#4f9f80" />
      <path d="M718 885.5 H737 L727.5 902 Z" fill="#8fdcff" stroke="#222" />
      <text x="738" y="895" fontSize="19" fontWeight="300" fill="#3a2fc4" className="font-[Roboto,sans-serif]">
        Visibility1
      </text>
    </svg>
  );
}

function Markup() {
  return (
    <svg
      className="pointer-events-none absolute top-0 left-0 z-20 h-[1022px] w-[1423px]"
      viewBox="0 0 1423 1022"
      fill="none"
      stroke="#fb0000"
      strokeWidth="6"
      strokeLinecap="round"
      strokeLinejoin="round"
      aria-hidden="true"
    >
      <path d="M1125 60 C1122 50 1112 41 1098 38 C1088 36 1080 40 1076 47" strokeWidth="8" />
      <path d="M1075 47 C1073 70 1077 95 1084 111 C1089 122 1094 129 1100 132" strokeWidth="5" />
      <path d="M1100 132 C1110 135 1120 132 1126 128" strokeWidth="7" />
      <path d="M1127 127 C1129 112 1134 107 1135 97 C1135 87 1131 77 1126 68" strokeWidth="5" />
      <path d="M1146 91 L1189 86" strokeWidth="8" strokeLinecap="butt" />
      <path
        d="M1098 134 C1096 150 1094 165 1088 188 C1082 215 1076 240 1069 260 C1057 292 1036 325 1018 358 C1004 388 993 414 975 440 C955 474 924 512 904 543 C886 570 878 595 858 624 C838 652 810 679 786 708 C770 728 757 751 744 766 C733 774 722 788 720 808"
        strokeWidth="5"
      />
      <path d="M712 789 L716 830 L720 806 L723 834" strokeWidth="5" />
      <path d="M713 788 L730 822" />
      <path d="M755 799 C752 812 733 818 723 835" />
      <path d="M678 838 C710 831 760 833 786 843 C812 853 825 871 825 892" strokeWidth="7" />
      <path d="M825 892 L823 920" strokeWidth="4" />
      <path d="M678 838 C672 850 672 875 680 893 L686 904" strokeWidth="5" />
      <path d="M686 904 C705 912 725 923 745 926 C770 928 800 926 815 923 C820 920 821 915 823 909" strokeWidth="7" />
      <path d="M703 245 C712 259 722 275 732 290 C740 301 748 309 753 322" />
      <path d="M737 245 C728 252 716 262 708 272 C702 282 695 290 690 301" />
      <path d="M712 467 L717 490 Q720 499 727 492 C745 472 760 451 773 429" />
    </svg>
  );
}

export default function App() {
  return (
    <div className="relative flex min-h-screen flex-col overflow-hidden bg-[#e1e2e6] font-['Noto_Sans','Open_Sans',sans-serif]">
      <header>
        <div className="flex h-[18px] overflow-hidden bg-linear-to-b from-[#a2a2a2] to-[#5c5c5c] text-[11px] leading-4 text-white">
          <div className="flex h-[14px] w-[38px] items-end justify-end border-r border-b border-[#222] bg-[#7c7c7c]">
            <svg className="h-[14px] w-[37px]" viewBox="0 0 37 14" aria-hidden="true">
              <path d="M0 0 H20 L16 4 L10 3 L5 8 L0 9 Z" fill="#8d0f16" />
              <path d="M4 0 L12 0 L7 6 Z" fill="#4d070b" />
              <text x="29" y="11" fontSize="8" fontWeight="bold" fill="#111">A</text>
            </svg>
          </div>
          <span className="pl-[14px]">Express</span>
        </div>
        <nav className="flex h-5 items-stretch bg-[#3f3f3f] text-[11px] text-[#f0f0f0]">
          {menuTabs.map(([name, width]) => (
            <button key={name} className={`shrink-0 whitespace-nowrap ${width}`}>
              {name}
            </button>
          ))}
          <button className="mt-[3px] ml-px w-[81px] shrink-0 rounded-t-xs border border-b-0 border-[#d3e04a] bg-linear-to-b from-[#cfd8a8] to-[#f1f5e2] pb-[2px] leading-[14px] whitespace-nowrap text-[#3c3c3c]">
            Block Editor
          </button>
          <button aria-label="Minimize ribbon" className="ml-[23px] flex items-center gap-[5px]">
            <span className="flex h-[7px] w-3 items-center justify-center rounded-xs bg-[#eee]">
              <span className="border-x-[3px] border-b-[3px] border-x-transparent border-b-[#333]" />
            </span>
            <span className="border-x-[3px] border-t-[3px] border-x-transparent border-t-[#eee]" />
          </button>
        </nav>
        <Ribbon />
        <div className="h-[7px] border-b border-[#8d8f94] bg-[#666762]" />
      </header>
      <main className="relative flex flex-1">
        <Drawing />
        <ToolPalette />
        <BlockPalette />
        <ProjectPalette />
        <DisplayPalette />
      </main>
      <Markup />
    </div>
  );
}
